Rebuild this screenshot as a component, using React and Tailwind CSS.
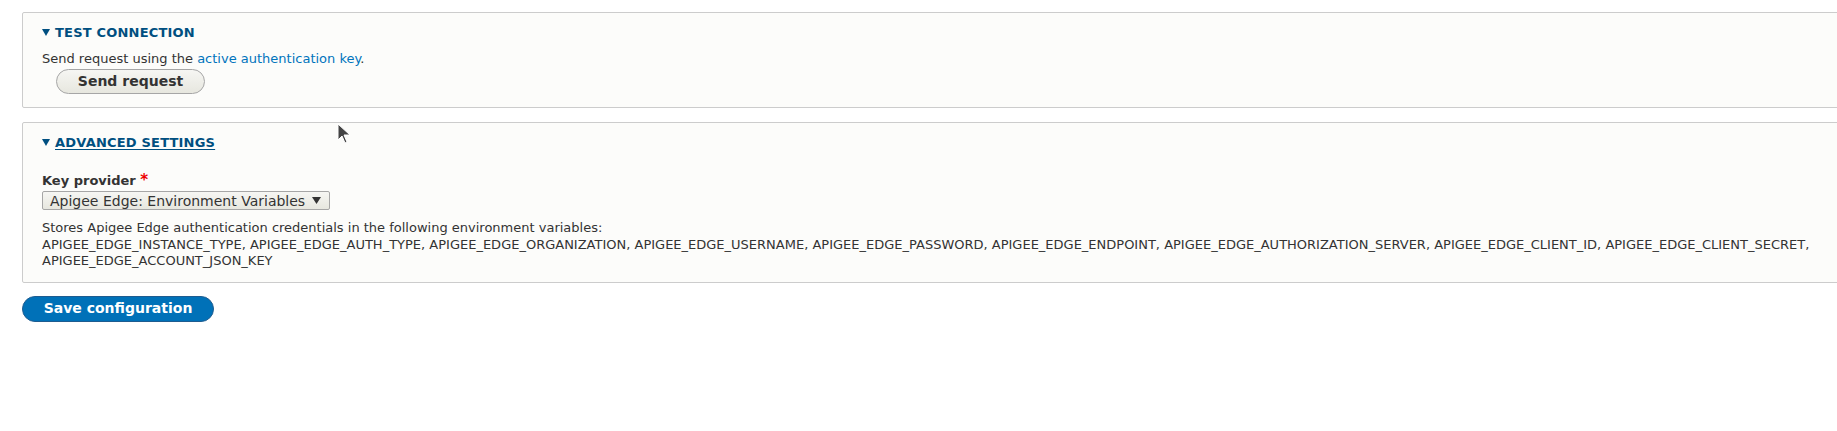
const vars = [
  "APIGEE_EDGE_INSTANCE_TYPE",
  "APIGEE_EDGE_AUTH_TYPE",
  "APIGEE_EDGE_ORGANIZATION",
  "APIGEE_EDGE_USERNAME",
  "APIGEE_EDGE_PASSWORD",
  "APIGEE_EDGE_ENDPOINT",
  "APIGEE_EDGE_AUTHORIZATION_SERVER",
  "APIGEE_EDGE_CLIENT_ID",
  "APIGEE_EDGE_CLIENT_SECRET",
  "APIGEE_EDGE_ACCOUNT_JSON_KEY",
]

const Summary = ({ children, underline }) => (
  <div className="flex items-center h-[20px] pl-[19px] text-[13px] font-bold uppercase tracking-[0.2px] text-[#004f80]">
    <svg className="mr-[5px] mt-[-1px]" width="8" height="7" viewBox="0 0 8 7">
      <path d="M0 0 L8 0 L4 7 Z" fill="#004f80" />
    </svg>
    <span className={underline ? "underline underline-offset-[2px]" : ""}>{children}</span>
  </div>
)

const App = () => {
  return (
    <div
      className="relative min-h-[431px] w-full overflow-hidden bg-white pl-[22px] pt-[12px] text-[#333]"
      style={{ fontFamily: '"DejaVu Sans", Verdana, sans-serif' }}
    >
      <div className="mr-[-6px] rounded-[2px] border border-[#ccc] bg-[#fcfcfa] pt-[10px] pb-[13px]">
        <Summary>Test connection</Summary>
        <div className="pl-[19px] mt-[7px] text-[13px] leading-[17px]">
          Send request using the <a className="text-[#0074bd]">active authentication key</a>.
        </div>
        <div className="pl-[33px] mt-[2px]">
          <button className="h-[25px] w-[149px] rounded-full border border-[#a6a6a6] bg-gradient-to-b from-[#f6f6f3] to-[#e7e7df] text-[14px] font-bold text-[#333]">
            Send request
          </button>
        </div>
      </div>

      <div className="mr-[-6px] mt-[14px] rounded-[2px] border border-[#ccc] bg-[#fcfcfa] pt-[10px] pb-[12px]">
        <Summary underline>Advanced settings</Summary>
        <div className="pl-[19px] mt-[19px] text-[13px] font-bold leading-[17px]">
          Key provider <span className="text-[15px] text-[#e00]">*</span>
        </div>
        <div className="pl-[19px] mt-[2px]">
          <div className="flex h-[19px] w-[288px] items-center justify-between rounded-[2px] border border-[#a6a6a6] bg-gradient-to-b from-[#f6f6f3] to-[#e7e7df] pl-[7px] pr-[8px] text-[14px] leading-[16px]">
            <span>Apigee Edge: Environment Variables</span>
            <svg width="9" height="7" viewBox="0 0 9 7">
              <path d="M0 0 L9 0 L4.5 7 Z" fill="#333" />
            </svg>
          </div>
        </div>
        <div className="pl-[19px] mt-[10px] pr-[20px] text-[13px] leading-[16.5px]">
          <div>Stores Apigee Edge authentication credentials in the following environment variables:</div>
          <div>{vars.join(", ")}</div>
        </div>
      </div>

      <button className="mt-[13px] h-[26px] w-[192px] rounded-full border border-[#1e5c90] bg-[#0071b8] text-[14px] font-bold text-white">
        Save configuration
      </button>

      <svg className="absolute left-[337px] top-[123px]" width="14" height="22" viewBox="0 0 14 22">
        <path d="M1 1 L1 17 L5 13 L8 20 L10 19 L7 12 L13 12 Z" fill="#444" stroke="#fff" strokeWidth="1" />
      </svg>
    </div>
  )
}

export default App
